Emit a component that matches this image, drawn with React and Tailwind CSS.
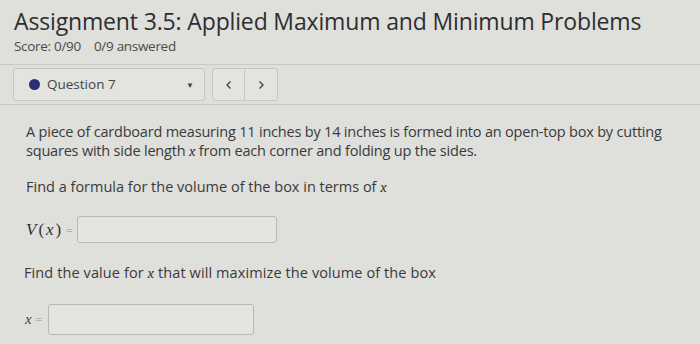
export default function App() {
  return (
    <div
      className="w-[700px] h-[344px] overflow-hidden bg-[#dfdfdc] text-[#3a3a3a]"
      style={{ fontFamily: '"Open Sans", "Noto Sans", sans-serif' }}
    >
      {/* Header */}
      <div className="pl-[14px] pt-[6px]">
        <h1 className="text-[23px] leading-[30px] text-[#2e2e2e] tracking-[-0.15px]">
          Assignment 3.5: Applied Maximum and Minimum Problems
        </h1>
        <div className="flex gap-[13px] text-[13.5px] leading-[18px] text-[#4a4a4a] mt-[1px] tracking-[-0.3px]">
          <span>Score: 0/90</span>
          <span>0/9 answered</span>
        </div>
      </div>

      {/* Question nav bar */}
      <div className="mt-[9px] border-t border-b border-[#c9c9c6] py-[3px] pl-[13px] flex items-center gap-[7px]">
        <div className="w-[192px] h-[33px] border border-[#c6c6c3] rounded-[3px] bg-[#e3e3e0] flex items-center pl-[15px] pr-[10px]">
          <span className="w-[11px] h-[11px] rounded-full bg-[#2c2f74]" />
          <span className="ml-[7px] text-[13.5px] text-[#444]">Question 7</span>
          <span className="ml-auto text-[8px] text-[#444]">▼</span>
        </div>
        <div className="h-[33px] flex border border-[#c6c6c3] rounded-[3px] bg-[#e3e3e0]">
          <button className="w-[32px] flex items-center justify-center border-r border-[#c6c6c3]">
            <svg width="8" height="10" viewBox="0 0 8 10" fill="none" stroke="#444" strokeWidth="1.4">
              <path d="M5.5 1.5 2 5l3.5 3.5" />
            </svg>
          </button>
          <button className="w-[32px] flex items-center justify-center">
            <svg width="8" height="10" viewBox="0 0 8 10" fill="none" stroke="#444" strokeWidth="1.4">
              <path d="M2.5 1.5 6 5 2.5 8.5" />
            </svg>
          </button>
        </div>
      </div>

      {/* Question body */}
      <div className="pl-[26px] pt-[17px] text-[14.5px] leading-[19px] tracking-[-0.2px] text-[#3a3a3a]">
        <p className="whitespace-nowrap">
          A piece of cardboard measuring 11 inches by 14 inches is formed into an open-top box by cutting
          <br />
          squares with side length <i className="font-serif">x</i> from each corner and folding up the sides.
        </p>
        <p className="mt-[16px] tracking-[0px]">
          Find a formula for the volume of the box in terms of <i className="font-serif">x</i>
        </p>
        <div className="mt-[19px] flex items-center">
          <span className="text-[17px] text-[#333] tracking-[2px]" style={{ fontFamily: '"Liberation Serif", serif' }}>
            <i>V</i>(<i>x</i>)
          </span>
          <span className="ml-[3px] text-[11px] text-[#888]">=</span>
          <div className="ml-[5px] w-[200px] h-[27px] border border-[#b8b8b5] rounded-[3px] bg-[#e4e4e1]" />
        </div>
      </div>

      <div className="pl-[24px] pt-[20px] text-[14.5px] leading-[19px] tracking-[0.1px] text-[#3a3a3a]">
        Find the value for <i className="font-serif">x</i> that will maximize the volume of the box
      </div>

      <div className="pl-[25px] mt-[21px] flex items-center">
        <span className="text-[15px] text-[#444]" style={{ fontFamily: '"Liberation Serif", serif' }}>
          <i>x</i>
        </span>
        <span className="ml-[4px] text-[11px] text-[#888]">=</span>
        <div className="ml-[6px] w-[206px] h-[31px] border border-[#b8b8b5] rounded-[3px] bg-[#e4e4e1]" />
      </div>
    </div>
  );
}
